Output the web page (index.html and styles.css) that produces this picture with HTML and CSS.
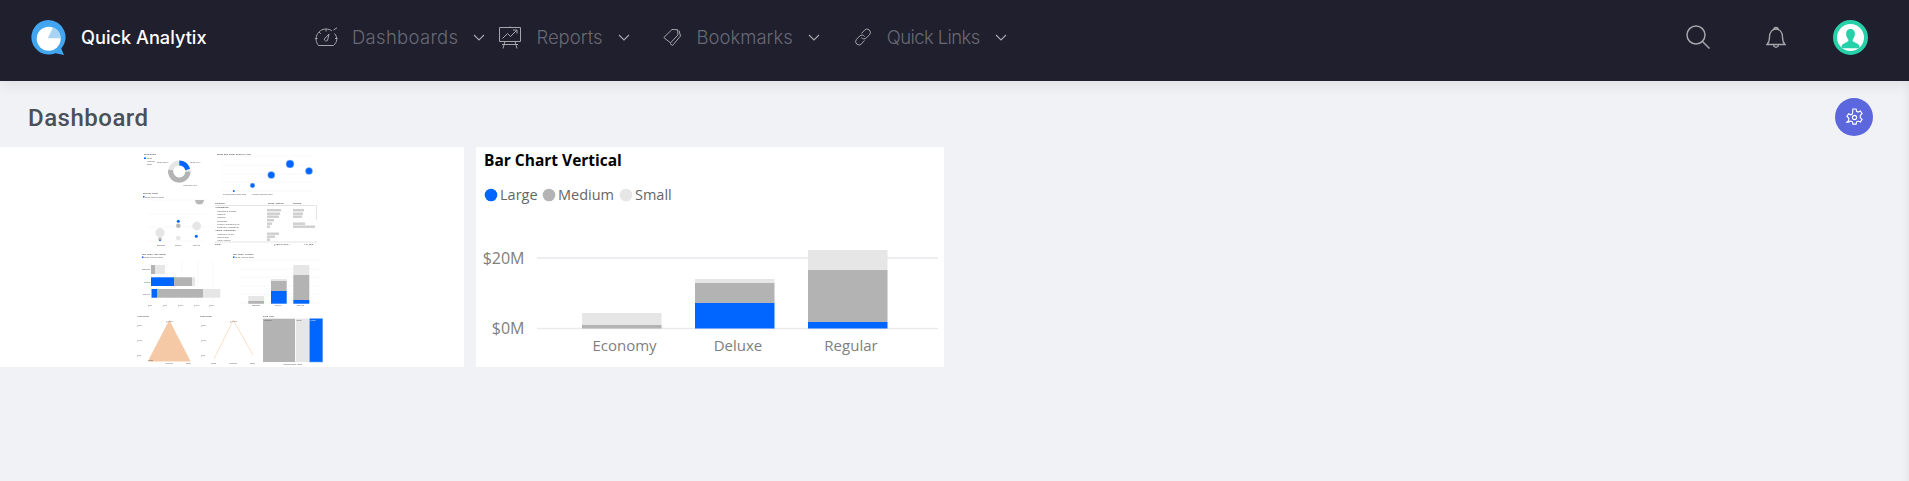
FILE: index.html
```html
<!DOCTYPE html>
<html lang="en">
<head>
    <meta charset="UTF-8">
    <meta name="viewport" content="width=device-width, initial-scale=1.0">
    <title>Quick Analytix - Dashboard</title>
    <link rel="stylesheet" href="styles.css">
</head>
<body>
    <div class="navbar">
        <div class="brand">
            <svg class="brand-logo" viewBox="0 0 35 35">
                <path class="logo-ring" d="M17.300 0a17.300 17.300 0 0 1 13 28.700L33 35l-8.500-1.800A17.300 17.300 0 1 1 17.300 0z"/>
                <circle class="logo-inner" cx="17.700" cy="18.700" r="12"/>
                <path class="logo-wedge" d="M16.700 18.300L22 7.500A12 12 0 0 1 29.700 18.300z"/>
            </svg>
            <span>Quick Analytix</span>
        </div>
        <div class="nav-links">
            <div class="nav-item nav-dashboards">
                <svg class="nav-icon" viewBox="0 0 24 20">
                    <path d="M4.500 18.500h15M4.500 18.500C-1 12 3.500 2 12 2c2.200 0 4.200.7 5.800 1.800M20.500 6.500c3.300 3.800 3 8.500-1 12M1 11.500h2.500M21 11.500h2.500M12 2v2.500M5 5l1.800 1.800M10.300 12l4.700-5-1.500 6.500a1.900 1.900 0 0 1-3.200-1.500zM19.500 3L23 .8"/>
                </svg>
                <span>Dashboards</span>
                <svg class="nav-chevron" viewBox="0 0 12 7"><path d="M1 1l5 5 5-5"/></svg>
            </div>
            <div class="nav-item nav-reports">
                <svg class="nav-icon" viewBox="0 0 22 23">
                    <path d="M.5 1.500h21v14H.5zM11 .5v1M6 15.500l-2 7M16 15.500l2 7M3.500 12.500l5-5 3 3 6-6M14 4h4v3.500M3 18.500h16"/>
                </svg>
                <span>Reports</span>
                <svg class="nav-chevron" viewBox="0 0 12 7"><path d="M1 1l5 5 5-5"/></svg>
            </div>
            <div class="nav-item nav-bookmarks">
                <svg class="nav-icon" viewBox="0 0 19 19">
                    <path d="M.8 9.500L9 1.500l5.500.2.500 5.200-7.500 8zM12 4.500v.1M16 2.500l1.500 5.500-8 9.500-2.500-2"/>
                </svg>
                <span>Bookmarks</span>
                <svg class="nav-chevron" viewBox="0 0 12 7"><path d="M1 1l5 5 5-5"/></svg>
            </div>
            <div class="nav-item nav-quick">
                <svg class="nav-icon" viewBox="0 0 18 18">
                    <path d="M7.500 5.500l3-3.300a3.300 3.300 0 0 1 5 4.500l-3.200 3.300a3.300 3.300 0 0 1-5-.5M10.500 12.500l-3 3.300a3.300 3.300 0 0 1-5-4.500l3.200-3.300a3.300 3.300 0 0 1 5 .5"/>
                </svg>
                <span>Quick Links</span>
                <svg class="nav-chevron" viewBox="0 0 12 7"><path d="M1 1l5 5 5-5"/></svg>
            </div>
        </div>
        <div class="nav-right">
            <svg class="search-icon" viewBox="0 0 24 24">
                <circle cx="10" cy="10" r="9"/>
                <path d="M16.500 16.500l7 7"/>
            </svg>
            <svg class="bell-icon" viewBox="0 0 20 23">
                <path d="M1 18.500c2-2 2.500-3.500 2.500-7.500 0-5 3-8 6.500-8s6.500 3 6.500 8c0 4 .5 5.500 2.500 7.500zM7.500 4c.5-3.500 4.500-3.500 5 0M7.500 19c.5 3 4.500 3 5 0"/>
            </svg>
            <div class="avatar">
                <svg viewBox="0 0 24 26">
                    <path d="M12 1c3.500 0 5 2.500 5 5.500 0 2.500-1 5-2.500 6.500v2l6 3c1.500 1 2 3 2 5H1.500c0-2 .5-4 2-5l6-3v-2C8 11.500 7 9 7 6.500 7 3.500 8.500 1 12 1z"/>
                </svg>
            </div>
        </div>
    </div>

    <div class="page-head">
        <h1>Dashboard</h1>
        <button class="settings-button">
            <svg viewBox="0 0 20 20">
                <path d="M8.300 1h3.400l.5 2.500 1.700.8 2.300-1.100 1.800 2.800-1.900 1.700v2.600l1.900 1.700-1.800 2.800-2.300-1.100-1.700.8-.5 2.500H8.300l-.5-2.500-1.700-.8-2.300 1.100L2 14.800l1.900-1.700v-2.600L2 8.800 3.800 6l2.300 1.100 1.700-.8z"/>
                <circle cx="10" cy="10" r="2.200"/>
            </svg>
        </button>
    </div>

    <div class="cards">
        <div class="card card-wide">
            <svg class="thumb" viewBox="0 0 464 220">
                <!-- donut -->
                <text class="thumb-title" x="144" y="8">Sum Sales</text>
                <rect class="blue" x="144" y="10.500" width="2" height="1.500"/>
                <text class="thumb-small" x="147" y="12">Large</text>
                <text class="thumb-small" x="147" y="15">Medium</text>
                <text class="thumb-small" x="147" y="18">Small</text>
                <circle class="ring-light" cx="179.300" cy="24.700" r="8.700"/>
                <path class="ring-medium" d="M188 24.700A8.700 8.700 0 1 1 170.700 23"/>
                <path class="ring-large" d="M179.300 16A8.700 8.700 0 0 1 187.700 22.500"/>
                <text class="thumb-small" x="157" y="16">Small 38.5M</text>
                <text class="thumb-small" x="190" y="16">Large 9.6M</text>
                <text class="thumb-small" x="183" y="39">Medium 24.9M</text>

                <!-- blue scatter -->
                <text class="thumb-title" x="217" y="8">Sales and Profit Ratio by Year</text>
                <line class="grid" x1="222" y1="9" x2="312" y2="9"/>
                <line class="grid" x1="222" y1="18" x2="312" y2="18"/>
                <line class="grid" x1="222" y1="27" x2="312" y2="27"/>
                <line class="grid" x1="222" y1="35" x2="312" y2="35"/>
                <line class="grid" x1="222" y1="44" x2="312" y2="44"/>
                <circle class="halo" cx="290" cy="17" r="4"/>
                <circle class="halo" cx="309" cy="24" r="3.600"/>
                <circle class="halo" cx="271.300" cy="28" r="3.600"/>
                <circle class="halo" cx="252.500" cy="38.500" r="2.400"/>
                <circle class="blue" cx="233.800" cy="44" r="1"/>
                <text class="thumb-small" x="223" y="48">Running Total 2007 Sales</text>
                <text class="thumb-small" x="252" y="48">Cluster Medium Large</text>

                <!-- table -->
                <text class="thumb-title" x="215" y="57">Category</text>
                <text class="thumb-title" x="268" y="57">Sales Amount</text>
                <text class="thumb-title" x="293" y="57">Orders</text>
                <line class="table-line" x1="215" y1="58.500" x2="317" y2="58.500"/>
                <text class="thumb-title" x="215" y="61">Accessories</text>
                <text class="thumb-small" x="217" y="65">Projectors &amp; Screens</text>
                <rect class="bar-cell" x="267" y="62" width="14" height="2.400"/>
                <rect class="bar-cell" x="293" y="62" width="11" height="2.400"/>
                <text class="thumb-small" x="217" y="68">Cameras</text>
                <rect class="bar-cell" x="267" y="65.500" width="13" height="2.400"/>
                <rect class="bar-cell" x="293" y="65.500" width="10" height="2.400"/>
                <text class="thumb-small" x="217" y="71">Monitors</text>
                <rect class="bar-cell" x="267" y="68.500" width="12" height="2.400"/>
                <rect class="bar-cell" x="293" y="68.500" width="9" height="2.400"/>
                <text class="thumb-small" x="217" y="75">Televisions</text>
                <rect class="bar-cell" x="267" y="72" width="7" height="2.400"/>
                <text class="thumb-small" x="217" y="78">Printers, Scanners &amp; Fax</text>
                <rect class="bar-cell" x="267" y="75.500" width="5" height="2.400"/>
                <rect class="bar-cell" x="293" y="75.500" width="12" height="2.400"/>
                <text class="thumb-small" x="217" y="81">Computers Accessories</text>
                <rect class="bar-cell" x="267" y="78.500" width="3" height="2.400"/>
                <rect class="bar-cell" x="293" y="78.500" width="22" height="2.400"/>
                <text class="thumb-title" x="215" y="84">Home Appliances</text>
                <text class="thumb-small" x="217" y="88">Washers &amp; Dryers</text>
                <rect class="bar-cell" x="267" y="85.500" width="12" height="2.400"/>
                <text class="thumb-small" x="217" y="91">Refrigerators</text>
                <rect class="bar-cell" x="267" y="88.500" width="8" height="2.400"/>
                <text class="thumb-small" x="217" y="94">Water Heaters</text>
                <rect class="bar-cell" x="267" y="91.500" width="3" height="2.400"/>
                <line class="table-line" x1="215" y1="95" x2="317" y2="95"/>
                <text class="thumb-title" x="215" y="98">Total</text>
                <text class="thumb-title" x="274" y="98">$482,943,574</text>
                <text class="thumb-title" x="304" y="98">174,365</text>
                <rect class="bar-light" x="316" y="58" width="1" height="15"/>

                <!-- grey scatter -->
                <text class="thumb-title" x="143" y="47">Scatter Chart</text>
                <rect class="blue" x="143" y="49" width="1.500" height="1.500"/>
                <text class="thumb-small" x="145" y="51">Large Medium Small</text>
                <line class="grid" x1="148" y1="53" x2="206" y2="53"/>
                <line class="grid" x1="148" y1="67" x2="206" y2="67"/>
                <line class="grid" x1="148" y1="80" x2="206" y2="80"/>
                <line class="grid" x1="148" y1="94" x2="206" y2="94"/>
                <path class="dot-medium" d="M195 53a4.500 4.500 0 0 0 9 0z"/>
                <circle class="dot-light" cx="160" cy="85.700" r="4.600"/>
                <circle class="dot-medium" cx="178.300" cy="78.700" r="2.300"/>
                <circle class="blue" cx="178.300" cy="74.300" r="1.500"/>
                <circle class="dot-light" cx="196.700" cy="79" r="4.400"/>
                <circle class="dot-light" cx="178.300" cy="91" r="2.300"/>
                <circle class="blue" cx="196.300" cy="89.300" r="1.500"/>
                <circle class="dot-medium" cx="160" cy="92" r="1.800"/>
                <circle class="blue" cx="160" cy="93.500" r=".8"/>
                <text class="thumb-small" x="157" y="99">Economy</text>
                <text class="thumb-small" x="175" y="99">Deluxe</text>
                <text class="thumb-small" x="193" y="99">Regular</text>

                <!-- horizontal bars -->
                <text class="thumb-title" x="142" y="108">Bar Chart Horizontal</text>
                <rect class="blue" x="142" y="109.500" width="1.500" height="1.500"/>
                <text class="thumb-small" x="144" y="111">Large Medium Small</text>
                <line class="grid" x1="151" y1="114" x2="151" y2="157"/>
                <line class="grid" x1="167" y1="114" x2="167" y2="157"/>
                <line class="grid" x1="182" y1="114" x2="182" y2="157"/>
                <line class="grid" x1="198" y1="114" x2="198" y2="157"/>
                <line class="grid" x1="213" y1="114" x2="213" y2="157"/>
                <text class="thumb-small" x="142" y="123">Economy</text>
                <text class="thumb-small" x="144" y="136">Deluxe</text>
                <text class="thumb-small" x="143" y="148">Regular</text>
                <rect class="bar-light" x="151" y="118" width="14" height="9"/>
                <rect class="bar-medium" x="151" y="118" width="4" height="9"/>
                <rect class="bar-light" x="174" y="130.300" width="21" height="8.700"/>
                <rect class="bar-medium" x="174" y="130.300" width="18" height="8.700"/>
                <rect class="blue" x="151" y="130.300" width="23" height="8.700"/>
                <rect class="bar-light" x="203" y="142" width="17.300" height="8.700"/>
                <rect class="bar-medium" x="157" y="142" width="46" height="8.700"/>
                <rect class="blue" x="151.500" y="142" width="5.500" height="8.700"/>
                <text class="thumb-small" x="148" y="159">$0M</text>
                <text class="thumb-small" x="163" y="159">$5M</text>
                <text class="thumb-small" x="178" y="159">$10M</text>
                <text class="thumb-small" x="194" y="159">$15M</text>
                <text class="thumb-small" x="209" y="159">$20M</text>

                <!-- vertical bars -->
                <text class="thumb-title" x="233" y="108">Bar Chart Vertical</text>
                <rect class="blue" x="233" y="109.500" width="1.500" height="1.500"/>
                <text class="thumb-small" x="235" y="111">Large Medium Small</text>
                <line class="grid" x1="240" y1="113" x2="320" y2="113"/>
                <line class="grid" x1="240" y1="122" x2="320" y2="122"/>
                <line class="grid" x1="240" y1="130" x2="320" y2="130"/>
                <line class="grid" x1="240" y1="139" x2="320" y2="139"/>
                <line class="grid" x1="240" y1="147" x2="320" y2="147"/>
                <line class="grid" x1="240" y1="156" x2="320" y2="156"/>
                <rect class="bar-light" x="248.300" y="149" width="15.700" height="7.700"/>
                <rect class="bar-medium" x="248.300" y="154" width="15.700" height="2.700"/>
                <rect class="bar-light" x="271" y="132" width="15.700" height="2"/>
                <rect class="bar-medium" x="271" y="134" width="15.700" height="10"/>
                <rect class="blue" x="271" y="144" width="15.700" height="12.700"/>
                <rect class="bar-light" x="293.300" y="118" width="16" height="10"/>
                <rect class="bar-medium" x="293.300" y="128" width="16" height="25"/>
                <rect class="blue" x="293.300" y="153" width="16" height="3.700"/>
                <text class="thumb-small" x="252" y="159">Economy</text>
                <text class="thumb-small" x="275" y="159">Deluxe</text>
                <text class="thumb-small" x="297" y="159">Regular</text>

                <!-- area and line -->
                <text class="thumb-title" x="137" y="170">Area Chart</text>
                <text class="thumb-small" x="137" y="179">$20M</text>
                <text class="thumb-small" x="137" y="194">$10M</text>
                <text class="thumb-small" x="137" y="209">$0M</text>
                <polygon class="area" points="169.300,173 150,210 148.300,214.500 190.700,214.500 188.300,210"/>
                <text class="thumb-small" x="166" y="175">$19.8M</text>
                <text class="thumb-small" x="148" y="214">Large</text>
                <text class="thumb-small" x="165" y="216.500">Medium</text>
                <text class="thumb-small" x="186" y="216.500">Small</text>

                <text class="thumb-title" x="200" y="170">Line Chart</text>
                <text class="thumb-small" x="201" y="179">$20M</text>
                <text class="thumb-small" x="201" y="194">$10M</text>
                <text class="thumb-small" x="201" y="209">$0M</text>
                <polyline class="line-series" points="214,212 233.300,173 253,208"/>
                <text class="thumb-small" x="230" y="175">$19.8M</text>
                <text class="thumb-small" x="211" y="216.500">Large</text>
                <text class="thumb-small" x="229" y="216.500">Medium</text>
                <text class="thumb-small" x="250" y="216.500">Small</text>

                <!-- treemap -->
                <text class="thumb-title" x="263" y="170">Tree Map</text>
                <rect class="bar-medium" x="263" y="171.700" width="32" height="43.300"/>
                <rect class="bar-light" x="295.700" y="171.700" width="13.300" height="43.300"/>
                <rect class="blue" x="309.700" y="171.700" width="13" height="43.300"/>
                <rect class="treemap-edge" x="309.700" y="171.700" width="13" height="43.300"/>
                <text class="thumb-small" x="264" y="174">Medium</text>
                <text class="thumb-small" x="296.500" y="174">Small</text>
                <text class="thumb-small tree-label" x="310.500" y="174">Large</text>
                <text class="thumb-small" x="283" y="217.500">Medium Small Large</text>
            </svg>
        </div>

        <div class="card card-chart">
            <svg class="chart" viewBox="0 0 468 220">
                <text class="chart-title" x="8" y="19">Bar Chart Vertical</text>

                <circle class="blue" cx="15" cy="48" r="6.300"/>
                <text class="legend-text" x="24" y="53">Large</text>
                <circle class="bar-medium" cx="73" cy="48" r="6.300"/>
                <text class="legend-text" x="82" y="53">Medium</text>
                <circle class="bar-light" cx="150" cy="48" r="6.300"/>
                <text class="legend-text" x="159" y="53">Small</text>

                <text class="axis-value" x="48.500" y="117" text-anchor="end">$20M</text>
                <text class="axis-value" x="48.500" y="187" text-anchor="end">$0M</text>
                <line class="grid-line" x1="61" y1="111" x2="462" y2="111"/>
                <line class="grid-line" x1="61" y1="181.500" x2="462" y2="181.500"/>

                <rect class="bar-light" x="106" y="166" width="79.500" height="15.500"/>
                <rect class="bar-medium" x="106" y="178" width="79.500" height="3.500"/>

                <rect class="bar-light" x="219" y="132" width="79.500" height="4"/>
                <rect class="bar-medium" x="219" y="136" width="79.500" height="20"/>
                <rect class="blue" x="219" y="156" width="79.500" height="25.500"/>

                <rect class="bar-light" x="332" y="103" width="79.500" height="20"/>
                <rect class="bar-medium" x="332" y="123" width="79.500" height="52"/>
                <rect class="blue" x="332" y="175" width="79.500" height="6.500"/>

                <text class="axis-text" x="148.500" y="204" text-anchor="middle">Economy</text>
                <text class="axis-text" x="262" y="204" text-anchor="middle">Deluxe</text>
                <text class="axis-text" x="375" y="204" text-anchor="middle">Regular</text>
            </svg>
        </div>
    </div>
</body>
</html>
```

FILE: styles.css
```css
body {
    font-family: "Open Sans", sans-serif;
    margin: 0;
    padding: 0;
    height: 481px;
    overflow: hidden;
    background-color: #f1f2f6;
    box-shadow: inset -10px 0 10px -10px rgba(0, 0, 0, 0.08);
}
.navbar {
    height: 81px;
    background-color: #201f2d;
    display: flex;
    align-items: center;
    padding: 0 41px 7px 31px;
    box-sizing: border-box;
    box-shadow: 0 4px 14px rgba(0, 0, 0, 0.08);
}
.brand {
    display: flex;
    align-items: center;
    gap: 15px;
    width: 283px;
    color: #fff;
    font-family: "Inter", sans-serif;
    font-size: 18.200px;
    font-weight: 500;
}
.brand-logo {
    width: 35px;
    height: 35px;
}
.logo-ring {
    fill: #42a5f0;
}
.logo-inner {
    fill: #fff;
}
.logo-wedge {
    fill: #a9d3f2;
}
.nav-links {
    display: flex;
    align-items: center;
    font-family: "Inter", sans-serif;
    font-size: 18.500px;
    font-weight: 300;
    color: #686974;
}
.nav-item {
    display: flex;
    align-items: center;
    gap: 15px;
}
.nav-icon {
    height: 20px;
    width: auto;
    fill: none;
    stroke: #a5a5ab;
    stroke-width: 1;
}
.nav-chevron {
    width: 12px;
    height: 7px;
    fill: none;
    stroke: #a5a5ab;
    stroke-width: 1.200;
}
.nav-dashboards .nav-icon {
    width: 24px;
    margin-right: -1px;
}
.nav-dashboards span {
    letter-spacing: 0.3px;
}
.nav-reports {
    margin-left: 14px;
}
.nav-reports .nav-icon {
    width: 22px;
    height: 23px;
}
.nav-bookmarks {
    margin-left: 33px;
}
.nav-bookmarks .nav-icon {
    width: 19px;
    height: 19px;
}
.nav-quick {
    margin-left: 34px;
}
.nav-quick .nav-icon {
    width: 18px;
    height: 18px;
}
.nav-quick span {
    letter-spacing: -0.6px;
}
.nav-right {
    margin-left: auto;
    display: flex;
    align-items: center;
}
.search-icon {
    width: 24px;
    height: 24px;
    fill: none;
    stroke: #a5a5ab;
    stroke-width: 1.500;
}
.bell-icon {
    width: 20px;
    height: 23px;
    margin-left: 56px;
    fill: none;
    stroke: #a5a5ab;
    stroke-width: 1.300;
}
.avatar {
    width: 35px;
    height: 35px;
    margin-left: 47px;
    box-sizing: border-box;
    border: 4px solid #26d0a8;
    border-radius: 50%;
    background-color: #fff;
    display: flex;
    align-items: flex-end;
    justify-content: center;
    overflow: hidden;
}
.avatar svg {
    width: 21px;
    height: 23px;
    fill: #26d0a8;
}
.page-head {
    height: 66px;
    display: flex;
    align-items: flex-start;
    justify-content: space-between;
    padding: 17px 36px 0 28px;
    box-sizing: border-box;
}
.page-head h1 {
    margin: 4px 0 0;
    font-family: "Roboto", sans-serif;
    font-size: 24px;
    line-height: 32px;
    font-weight: 500;
    color: #495057;
    letter-spacing: 0.5px;
}
.settings-button {
    width: 38px;
    height: 38px;
    padding: 0;
    border: none;
    border-radius: 50%;
    background-color: #5c67de;
    display: flex;
    align-items: center;
    justify-content: center;
}
.settings-button svg {
    width: 19px;
    height: 19px;
    fill: none;
    stroke: #fff;
    stroke-width: 1.200;
}
.cards {
    display: flex;
    gap: 12px;
}
.card {
    height: 220px;
    background-color: #fff;
}
.card-wide {
    width: 464px;
}
.card-chart {
    width: 468px;
}
.thumb,
.chart {
    display: block;
    width: 100%;
    height: 100%;
}
.thumb {
    filter: blur(0.3px);
}
.blue {
    fill: #0066ff;
}
.bar-medium {
    fill: #b3b3b3;
}
.bar-light {
    fill: #e6e6e6;
}
.chart-title {
    font-size: 15.500px;
    font-weight: 700;
    fill: #000;
}
.legend-text {
    font-size: 14.500px;
    fill: #666;
}
.axis-text {
    font-size: 15px;
    fill: #808080;
}
.axis-value {
    font-size: 16px;
    fill: #808080;
}
.grid-line {
    stroke: #e9e9ee;
    stroke-width: 1.500;
}
.thumb-title {
    font-size: 2.500px;
    fill: #222;
}
.thumb-small {
    font-size: 2px;
    fill: #555;
}
.tree-label {
    fill: #fff;
}
.grid {
    stroke: #f2f2f2;
    stroke-width: 0.500;
}
.ring-light {
    fill: none;
    stroke: #e6e6e6;
    stroke-width: 5;
}
.ring-medium {
    fill: none;
    stroke: #b3b3b3;
    stroke-width: 5;
}
.ring-large {
    fill: none;
    stroke: #0066ff;
    stroke-width: 5;
}
.halo {
    fill: #0066ff;
    stroke: #a8ccff;
    stroke-width: 0.500;
}
.dot-medium {
    fill: #b9b9b9;
}
.dot-light {
    fill: #e6e6e6;
}
.table-line {
    stroke: #bbb;
    stroke-width: 0.400;
}
.bar-cell {
    fill: #cfcfcf;
}
.area {
    fill: #f5c8a6;
}
.line-series {
    fill: none;
    stroke: #f9d5b8;
    stroke-width: 0.800;
}
.treemap-edge {
    fill: none;
    stroke: #6aa5ff;
    stroke-width: 0.600;
}
```
